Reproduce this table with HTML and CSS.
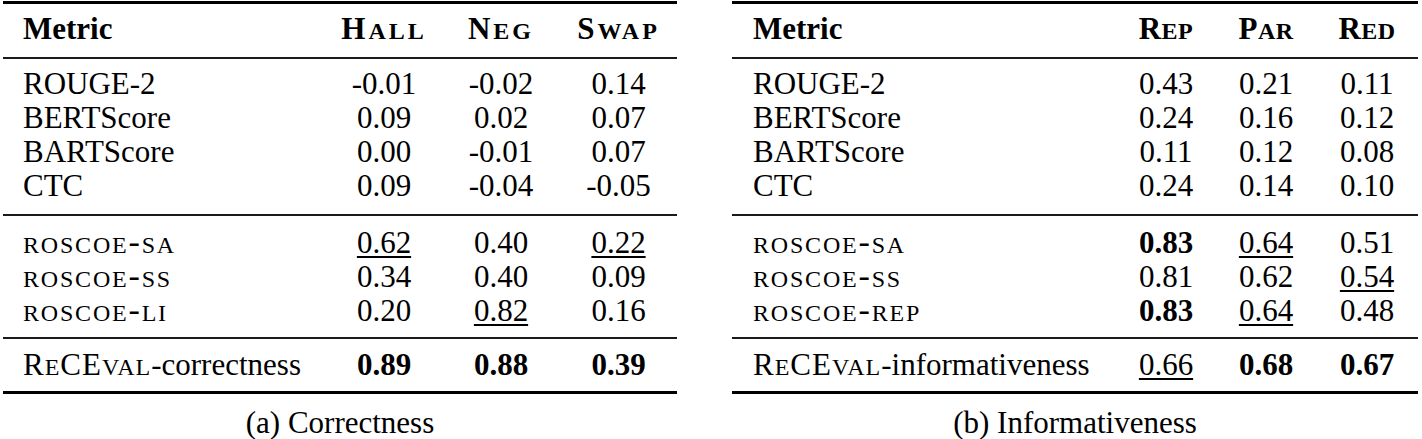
FILE: index.html
```html
<!DOCTYPE html>
<html lang="en">
<head>
<meta charset="utf-8">
<title>Correctness and Informativeness</title>
<link rel="stylesheet" href="styles.css">
</head>
<body>
<div class="page">
  <figure class="sub sub-a">
    <table class="tbl tbl-a">
      <colgroup><col class="c-metric"><col class="c-v1"><col class="c-v2"><col class="c-v3"></colgroup>
      <thead>
        <tr><th class="metric">Metric</th><th><span class="hsc">H<span class="smc">all</span></span></th><th><span class="hsc">N<span class="smc">eg</span></span></th><th><span class="hsc">S<span class="smc">wap</span></span></th></tr>
      </thead>
      <tbody class="g1">
        <tr><td class="metric">ROUGE-2</td><td>-0.01</td><td>-0.02</td><td>0.14</td></tr>
        <tr><td class="metric">BERTScore</td><td>0.09</td><td>0.02</td><td>0.07</td></tr>
        <tr><td class="metric">BARTScore</td><td>0.00</td><td>-0.01</td><td>0.07</td></tr>
        <tr><td class="metric">CTC</td><td>0.09</td><td>-0.04</td><td>-0.05</td></tr>
      </tbody>
      <tbody class="g2">
        <tr><td class="metric"><span class="smc sc">roscoe-sa</span></td><td><span class="u">0.62</span></td><td>0.40</td><td><span class="u">0.22</span></td></tr>
        <tr><td class="metric"><span class="smc sc">roscoe-ss</span></td><td>0.34</td><td>0.40</td><td>0.09</td></tr>
        <tr><td class="metric"><span class="smc sc">roscoe-li</span></td><td>0.20</td><td><span class="u">0.82</span></td><td>0.16</td></tr>
      </tbody>
      <tbody class="g3">
        <tr><td class="metric"><span class="rsc">R<span class="smc">e</span>CE<span class="smc">val</span></span>-correctness</td><td class="b">0.89</td><td class="b">0.88</td><td class="b">0.39</td></tr>
      </tbody>
    </table>
    <figcaption>(a) Correctness</figcaption>
  </figure>
  <figure class="sub sub-b">
    <table class="tbl tbl-b">
      <colgroup><col class="c-metric"><col class="c-v1"><col class="c-v2"><col class="c-v3"></colgroup>
      <thead>
        <tr><th class="metric">Metric</th><th><span class="hsc">R<span class="smc">ep</span></span></th><th><span class="hsc">P<span class="smc">ar</span></span></th><th><span class="hsc">R<span class="smc">ed</span></span></th></tr>
      </thead>
      <tbody class="g1">
        <tr><td class="metric">ROUGE-2</td><td>0.43</td><td>0.21</td><td>0.11</td></tr>
        <tr><td class="metric">BERTScore</td><td>0.24</td><td>0.16</td><td>0.12</td></tr>
        <tr><td class="metric">BARTScore</td><td>0.11</td><td>0.12</td><td>0.08</td></tr>
        <tr><td class="metric">CTC</td><td>0.24</td><td>0.14</td><td>0.10</td></tr>
      </tbody>
      <tbody class="g2">
        <tr><td class="metric"><span class="smc sc">roscoe-sa</span></td><td class="b">0.83</td><td><span class="u">0.64</span></td><td>0.51</td></tr>
        <tr><td class="metric"><span class="smc sc">roscoe-ss</span></td><td>0.81</td><td>0.62</td><td><span class="u">0.54</span></td></tr>
        <tr><td class="metric"><span class="smc sc">roscoe-rep</span></td><td class="b">0.83</td><td><span class="u">0.64</span></td><td>0.48</td></tr>
      </tbody>
      <tbody class="g3">
        <tr><td class="metric"><span class="rsc">R<span class="smc">e</span>CE<span class="smc">val</span></span>-informativeness</td><td><span class="u">0.66</span></td><td class="b">0.68</td><td class="b">0.67</td></tr>
      </tbody>
    </table>
    <figcaption>(b) Informativeness</figcaption>
  </figure>
</div>
</body>
</html>
```

FILE: styles.css
```css
html, body {
  margin: 0;
  padding: 0;
  background: #ffffff;
}

body {
  padding-top: 1px;
  color: #000000;
  font-family: "Liberation Serif", "Times New Roman", serif;
  font-size: 31px;
  line-height: 34px;
}

.page {
  display: flex;
  gap: 55px;
  padding-left: 3px;
}

.sub {
  margin: 0;
  display: flex;
  flex-direction: column;
}

.sub-a { width: 674px; }
.sub-b { width: 686px; }

.tbl {
  border-collapse: separate;
  border-spacing: 0;
  table-layout: fixed;
  width: 100%;
}

.tbl-a .c-metric { width: 323px; }
.tbl-a .c-v1 { width: 116px; }
.tbl-a .c-v2 { width: 118px; }

.tbl-b .c-metric { width: 384px; }
.tbl-b .c-v1 { width: 100px; }
.tbl-b .c-v2 { width: 100px; }

.tbl th,
.tbl td {
  padding: 0;
  text-align: center;
  white-space: nowrap;
  vertical-align: baseline;
}

.tbl .metric {
  text-align: left;
  padding-left: 20px;
}

.tbl-b .metric {
  padding-left: 21px;
}

.tbl th {
  font-weight: bold;
  border-top: 3px solid #000;
  border-bottom: 2px solid #1a1a1a;
  padding-top: 7.5px;
  padding-bottom: 11.5px;
}

.g1 tr:first-child td { padding-top: 8px; }
.g1 tr:last-child td {
  padding-bottom: 11px;
  border-bottom: 2px solid #1a1a1a;
}

.g2 tr:first-child td { padding-top: 10px; }
.g2 tr:last-child td {
  padding-bottom: 9px;
  border-bottom: 2px solid #1a1a1a;
}

.g3 td {
  padding-top: 8.5px;
  padding-bottom: 9.5px;
  border-bottom: 3px solid #000;
}

/* synthesized small capitals, enlarged so they sit at ~0.77 of the cap height */
.smc {
  font-variant: small-caps;
  font-size: 1.1em;
  line-height: 20px;
}

.sc {
  letter-spacing: 1.8px;
}

.hsc {
  letter-spacing: 3px;
}

.tbl-b .hsc {
  letter-spacing: 0.5px;
}

.rsc {
  letter-spacing: 1px;
}

.b { font-weight: bold; }

.u {
  text-decoration: underline;
  text-decoration-thickness: 1.5px;
  text-underline-offset: 3px;
}

figcaption {
  margin-top: 11.5px;
  text-align: center;
}
```
